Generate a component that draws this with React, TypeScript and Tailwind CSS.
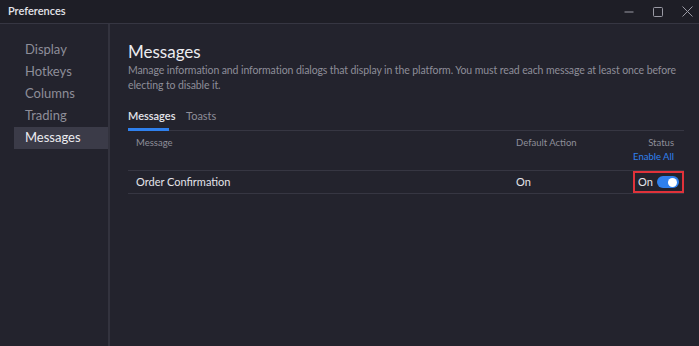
import React from "react";

export default function App() {
  const font = { fontFamily: "Lato, 'Noto Sans', sans-serif" };
  const nav = ["Display", "Hotkeys", "Columns", "Trading", "Messages"];
  return (
    <div className="w-[699px] h-[346px] bg-[#23232d] flex flex-col overflow-hidden" style={font}>
      <div className="h-[24px] shrink-0 bg-[#1e1e26] border-b border-[#363642] flex items-center pl-[8px]">
        <span className="text-[11px] text-[#e4e4ea] font-semibold">Preferences</span>
        <div className="ml-auto flex items-center gap-[19px] pr-[6px] text-[#9a9aa4]">
          <svg width="10" height="10" viewBox="0 0 10 10"><path d="M0.5 5h9" stroke="currentColor" strokeWidth="1" /></svg>
          <svg width="10" height="10" viewBox="0 0 10 10"><rect x="0.5" y="0.5" width="9" height="9" rx="1" fill="none" stroke="currentColor" strokeWidth="1" /></svg>
          <svg width="11" height="11" viewBox="0 0 11 11"><path d="M0.5 0.5l10 10M10.5 0.5l-10 10" stroke="currentColor" strokeWidth="1" /></svg>
        </div>
      </div>
      <div className="flex flex-1">
        <div className="w-[110px] shrink-0 border-r-2 border-[#33333e] pt-[15px] pl-[14px] flex flex-col">
          {nav.map((n) => (
            <div
              key={n}
              className={
                "h-[22px] flex items-center pl-[11px] text-[13px] " +
                (n === "Messages" ? "bg-[#3b3b48] text-[#ececf0]" : "text-[#8e8e99]")
              }
            >
              {n}
            </div>
          ))}
        </div>
        <div className="flex-1 pl-[18px] pr-[15px] pt-[17px]">
          <div className="text-[17px] text-[#ececf0] leading-[22px]">Messages</div>
          <div className="text-[10.5px] tracking-[-0.1px] text-[#8e8e99] leading-[15px] w-[552px]">
            Manage information and information dialogs that display in the platform. You must read each message at least once before electing to disable it.
          </div>
          <div className="flex mt-[16px] border-b border-[#363642] text-[11px] leading-[14px]">
            <div className="pb-[5px] text-[#e4e4ea] font-semibold border-b-[3px] border-[#2f80ed] -mb-[1px] w-[41px]">Messages</div>
            <div className="pb-[5px] text-[#8e8e99] ml-[17px]">Toasts</div>
          </div>
          <div className="flex text-[9.5px] leading-[12px] text-[#8e8e99] border-b border-[#363642] pt-[6px] pb-[7px] pl-[8px] pr-[10px]">
            <div className="flex-1">Message</div>
            <div className="w-[117px]">Default Action</div>
            <div className="flex flex-col items-end">
              <span>Status</span>
              <span className="text-[#2f80ed] mt-[2px]">Enable All</span>
            </div>
          </div>
          <div className="flex items-center h-[23px] border-b border-[#363642] pl-[8px] text-[11px] text-[#e4e4ea]">
            <div className="flex-1">Order Confirmation</div>
            <div className="w-[117px]">On</div>
            <div className="h-[22px] w-[51px] border-2 border-[#e0323a] flex items-center pl-[3px] gap-[4px]">
              <span>On</span>
              <div className="w-[22px] h-[12px] rounded-full bg-[#2f80ed] flex items-center justify-end pr-[2px]">
                <div className="w-[9px] h-[9px] rounded-full bg-white" />
              </div>
            </div>
          </div>
        </div>
      </div>
    </div>
  );
}
